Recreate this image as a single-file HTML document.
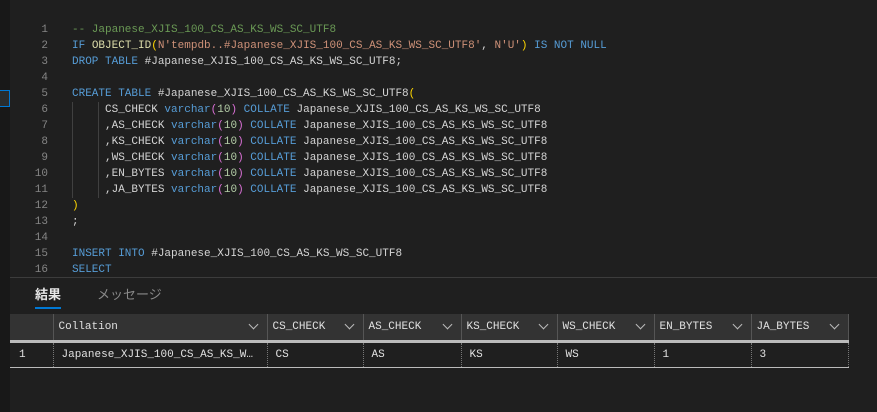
<!DOCTYPE html>
<html><head><meta charset="utf-8"><style>
body{margin:0;width:877px;height:412px;background:#1f1f1f;overflow:hidden;position:relative;font-family:"Liberation Mono",monospace;font-size:11px}
.side{position:absolute;left:0;top:0;width:10px;height:412px;background:#181818}
.ln{position:absolute;left:20px;width:28px;text-align:right;color:#858585;height:16px;line-height:16px}
.cd{position:absolute;left:72px;color:#d4d4d4;white-space:pre;height:16px;line-height:16px}
.c{color:#6a9955}.k{color:#569cd6}.s{color:#ce9178}.f{color:#dcdcaa}.y{color:#ffd700}.p{color:#da70d6}.n{color:#b5cea8}
.g{position:absolute;width:1px;background:#404040}
.sep{position:absolute;left:10px;top:277px;width:867px;height:1px;background:#3c3c3c}
.tab{position:absolute;top:284px;font-family:"Liberation Sans","Noto Sans CJK JP",sans-serif;font-size:13px}
table{position:absolute;left:10px;top:314px;border-collapse:collapse;color:#e0e0e0;font-size:11px;table-layout:fixed;width:838px}
th{background:#333;height:26px;text-align:left;font-weight:normal;padding:0 0 0 5px;border-left:1px solid #555;border-bottom:3px solid #bbb;position:relative;overflow:hidden;white-space:nowrap}
th .v{position:absolute;right:10px;top:7px;width:6px;height:6px;border-right:1.5px solid #bbb;border-bottom:1.5px solid #bbb;transform:rotate(45deg)}
td{height:24px;padding:0 0 0 8px;border-left:1px dotted #777;border-bottom:1px solid #bbb;white-space:nowrap;overflow:hidden}
</style></head><body>
<div class="side"></div>
<div style="position:absolute;left:0;top:90px;width:9px;height:15px;border:1px solid #0078d4;border-left:none;background:#2a2d2e"></div>
<div class="g" style="left:72px;top:102px;height:96px"></div>
<div class="g" style="left:98px;top:102px;height:96px"></div>
<div class="ln" style="top:22px">1</div><div class="cd" style="top:22px"><span class="c">-- Japanese_XJIS_100_CS_AS_KS_WS_SC_UTF8</span></div>
<div class="ln" style="top:38px">2</div><div class="cd" style="top:38px"><span class="k">IF</span> <span class="f">OBJECT_ID</span><span class="y">(</span><span class="s">N'tempdb..#Japanese_XJIS_100_CS_AS_KS_WS_SC_UTF8'</span>, <span class="s">N'U'</span><span class="y">)</span> <span class="k">IS NOT NULL</span></div>
<div class="ln" style="top:54px">3</div><div class="cd" style="top:54px"><span class="k">DROP TABLE</span> #Japanese_XJIS_100_CS_AS_KS_WS_SC_UTF8;</div>
<div class="ln" style="top:70px">4</div>
<div class="ln" style="top:86px">5</div><div class="cd" style="top:86px"><span class="k">CREATE TABLE</span> #Japanese_XJIS_100_CS_AS_KS_WS_SC_UTF8<span class="y">(</span></div>
<div class="ln" style="top:102px">6</div><div class="cd" style="top:102px">     CS_CHECK <span class="k">varchar</span><span class="p">(</span><span class="n">10</span><span class="p">)</span> <span class="k">COLLATE</span> Japanese_XJIS_100_CS_AS_KS_WS_SC_UTF8</div>
<div class="ln" style="top:118px">7</div><div class="cd" style="top:118px">     ,AS_CHECK <span class="k">varchar</span><span class="p">(</span><span class="n">10</span><span class="p">)</span> <span class="k">COLLATE</span> Japanese_XJIS_100_CS_AS_KS_WS_SC_UTF8</div>
<div class="ln" style="top:134px">8</div><div class="cd" style="top:134px">     ,KS_CHECK <span class="k">varchar</span><span class="p">(</span><span class="n">10</span><span class="p">)</span> <span class="k">COLLATE</span> Japanese_XJIS_100_CS_AS_KS_WS_SC_UTF8</div>
<div class="ln" style="top:150px">9</div><div class="cd" style="top:150px">     ,WS_CHECK <span class="k">varchar</span><span class="p">(</span><span class="n">10</span><span class="p">)</span> <span class="k">COLLATE</span> Japanese_XJIS_100_CS_AS_KS_WS_SC_UTF8</div>
<div class="ln" style="top:166px">10</div><div class="cd" style="top:166px">     ,EN_BYTES <span class="k">varchar</span><span class="p">(</span><span class="n">10</span><span class="p">)</span> <span class="k">COLLATE</span> Japanese_XJIS_100_CS_AS_KS_WS_SC_UTF8</div>
<div class="ln" style="top:182px">11</div><div class="cd" style="top:182px">     ,JA_BYTES <span class="k">varchar</span><span class="p">(</span><span class="n">10</span><span class="p">)</span> <span class="k">COLLATE</span> Japanese_XJIS_100_CS_AS_KS_WS_SC_UTF8</div>
<div class="ln" style="top:198px">12</div><div class="cd" style="top:198px"><span class="y">)</span></div>
<div class="ln" style="top:214px">13</div><div class="cd" style="top:214px">;</div>
<div class="ln" style="top:230px">14</div>
<div class="ln" style="top:246px">15</div><div class="cd" style="top:246px"><span class="k">INSERT INTO</span> #Japanese_XJIS_100_CS_AS_KS_WS_SC_UTF8</div>
<div class="ln" style="top:262px">16</div><div class="cd" style="top:262px"><span class="k">SELECT</span></div>
<div class="sep"></div>
<div class="tab" style="left:35px;color:#e7e7e7;font-weight:bold">結果</div>
<div style="position:absolute;left:35px;top:307px;width:26px;height:2px;background:#0078d4"></div>
<div class="tab" style="left:97px;color:#8a8a8a">メッセージ</div>
<table>
<colgroup><col style="width:43px"><col style="width:214px"><col style="width:96px"><col style="width:98px"><col style="width:96px"><col style="width:97px"><col style="width:97px"><col style="width:97px"></colgroup>
<tr><th style="border-left:none"></th><th>Collation<span class="v"></span></th><th>CS_CHECK<span class="v"></span></th><th>AS_CHECK<span class="v"></span></th><th>KS_CHECK<span class="v"></span></th><th>WS_CHECK<span class="v"></span></th><th>EN_BYTES<span class="v"></span></th><th style="border-right:1px solid #555">JA_BYTES<span class="v"></span></th></tr>
<tr><td style="border-left:none;padding-left:9px">1</td><td>Japanese_XJIS_100_CS_AS_KS_W…</td><td>CS</td><td>AS</td><td>KS</td><td>WS</td><td>1</td><td style="border-right:1px dotted #777">3</td></tr>
</table>
</body></html>
